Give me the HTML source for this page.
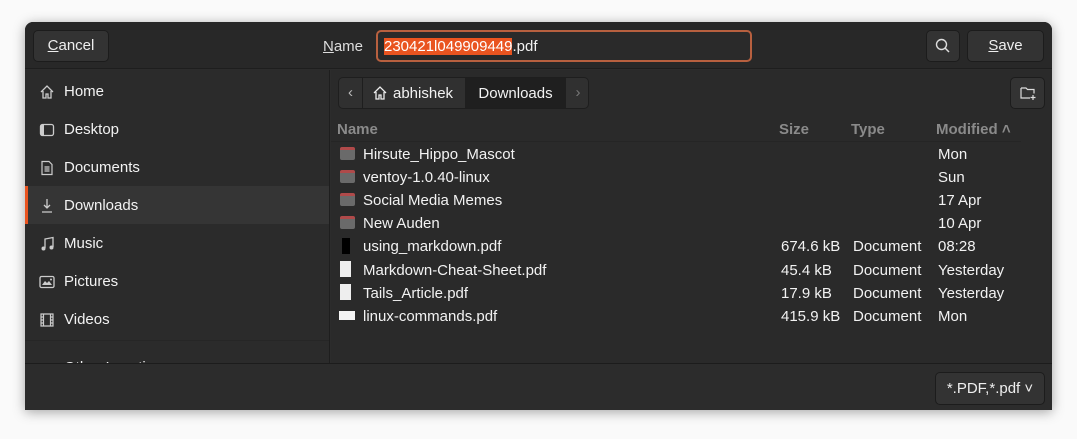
<!DOCTYPE html>
<html><head><style>
*{box-sizing:border-box;margin:0;padding:0}
body{width:1077px;height:439px;background:#fafafa;font-family:"Liberation Sans","DejaVu Sans",sans-serif;font-size:15px;color:#f2f2f2;position:relative;overflow:hidden}
.win{position:absolute;left:25px;top:22px;width:1027px;height:388px;background:#2c2c2c;border-radius:8px 8px 0 0;box-shadow:0 2px 12px rgba(0,0,0,.35);overflow:hidden}
.hdr{position:absolute;left:0;top:0;width:1027px;height:47px;background:#282828;border-bottom:1px solid #1e1e1e}
.btn{position:absolute;background:#333;border:1px solid #1c1c1c;border-radius:5px;text-align:center;line-height:30px;color:#eee}
.side{position:absolute;left:0;top:48px;width:305px;height:293px;background:#2b2b2b;border-right:1px solid #1e1e1e;overflow:hidden}
.si{position:absolute;left:0;width:305px;height:38px;line-height:40px;padding-left:39px}
.si b{font-weight:normal;position:absolute;left:39px}
.list{position:absolute;left:306px;top:48px;width:721px;height:293px;background:#2a2a2a}
.row{position:absolute;left:0;width:690px;height:23px;line-height:25px}
.row span{position:absolute}
.bot{position:absolute;left:0;top:341px;width:1027px;height:47px;background:#2c2c2c;border-top:1px solid #1c1c1c}
.fold{position:absolute;left:9px;top:5px;width:15px;height:13px;background:#6a6a6a;border-top:3px solid #b04a4a;border-radius:2px}
.hd{color:#8a8a8a;font-weight:bold}
</style></head><body>
<div class="win">
 <div class="hdr">
  <div class="btn" style="left:8px;top:8px;width:76px;height:32px"><u>C</u>ancel</div>
  <div style="position:absolute;left:298px;top:16px;color:#ddd"><u>N</u>ame</div>
  <div style="position:absolute;left:351px;top:8px;width:376px;height:32px;border:2px solid #b8603f;border-radius:5px;background:#2a2a2a">
   <span style="position:absolute;left:6px;top:5px;line-height:19px"><span style="background:#e95420;color:#fff">230421l049909449</span>.pdf</span>
  </div>
  <div class="btn" style="left:901px;top:8px;width:34px;height:32px">
   <svg width="16" height="16" viewBox="0 0 16 16" style="margin-top:7px"><circle cx="6.5" cy="6.5" r="5" fill="none" stroke="#ddd" stroke-width="1.4"/><path d="M10 10l4 4" stroke="#ddd" stroke-width="1.5"/></svg>
  </div>
  <div class="btn" style="left:942px;top:8px;width:77px;height:32px"><u>S</u>ave</div>
 </div>
 <div class="side">
  <div class="si" style="top:2px"><svg style="position:absolute;left:14px;top:12px" width="16" height="16" viewBox="0 0 16 16"><path d="M2 8L8 2l6 6M4 7v7h3v-4h2v4h3V7" fill="none" stroke="#ccc" stroke-width="1.3"/></svg><b>Home</b></div>
  <div class="si" style="top:40px"><svg style="position:absolute;left:14px;top:12px" width="16" height="16" viewBox="0 0 16 16"><rect x="1.5" y="2.5" width="13" height="11" rx="2" fill="none" stroke="#ccc" stroke-width="1.3"/><rect x="2" y="3" width="3" height="10" fill="#ccc"/></svg><b>Desktop</b></div>
  <div class="si" style="top:78px"><svg style="position:absolute;left:14px;top:12px" width="16" height="16" viewBox="0 0 16 16"><path d="M3 1.5h7l3 3v10H3z M5.5 7h5M5.5 9h5M5.5 11h5" fill="none" stroke="#ccc" stroke-width="1.2"/></svg><b>Documents</b></div>
  <div class="si" style="top:116px;background:#353535"><div style="position:absolute;left:0;top:0;width:3px;height:38px;background:#e95420"></div><svg style="position:absolute;left:14px;top:12px" width="16" height="16" viewBox="0 0 16 16"><path d="M8 1v9M5 7l3 3 3-3M3 14h10" fill="none" stroke="#ccc" stroke-width="1.3"/></svg><b>Downloads</b></div>
  <div class="si" style="top:154px"><svg style="position:absolute;left:14px;top:12px" width="16" height="16" viewBox="0 0 16 16"><path d="M6 12V3l8-1.5V11" fill="none" stroke="#ccc" stroke-width="1.3"/><circle cx="4.5" cy="12.5" r="2" fill="#ccc"/><circle cx="12.5" cy="11.5" r="2" fill="#ccc"/></svg><b>Music</b></div>
  <div class="si" style="top:192px"><svg style="position:absolute;left:14px;top:12px" width="16" height="16" viewBox="0 0 16 16"><rect x="1" y="2.5" width="14" height="11" rx="1.5" fill="none" stroke="#ccc" stroke-width="1.3"/><path d="M3 11l3-4 2 2 2-2 3 4z" fill="#ccc"/><circle cx="12" cy="5.5" r="1" fill="#ccc"/></svg><b>Pictures</b></div>
  <div class="si" style="top:230px"><svg style="position:absolute;left:14px;top:12px" width="16" height="16" viewBox="0 0 16 16"><path d="M2 2h12v12H2zM4.5 2v12M11.5 2v12M2 5h2.5M2 8h2.5M2 11h2.5M11.5 5H14M11.5 8H14M11.5 11H14" fill="none" stroke="#ccc" stroke-width="1.2"/></svg><b>Videos</b></div>
  <div style="position:absolute;left:0;top:270px;width:305px;height:1px;background:#262626"></div>
  <div style="position:absolute;left:39px;top:289px;color:#eee">Other Locations</div>
 </div>
 <div class="list">
  <div style="position:absolute;left:7px;top:7px;width:251px;height:32px;border:1px solid #1e1e1e;border-radius:5px;background:#303030;overflow:hidden">
   <div style="position:absolute;left:0;top:0;width:24px;height:30px;border-right:1px solid #1e1e1e;text-align:center;line-height:30px;color:#bbb">‹</div>
   <svg style="position:absolute;left:33px;top:7px" width="16" height="16" viewBox="0 0 16 16"><path d="M2 8L8 2l6 6M4 7v7h3v-4h2v4h3V7" fill="none" stroke="#eee" stroke-width="1.3"/></svg>
   <div style="position:absolute;left:54px;top:0;line-height:31px">abhishek</div>
   <div style="position:absolute;left:126px;top:0;width:101px;height:30px;background:#1f1f1f;line-height:31px;text-align:center">Downloads</div>
   <div style="position:absolute;left:227px;top:0;width:24px;height:30px;text-align:center;line-height:30px;color:#777">›</div>
  </div>
  <div class="btn" style="left:679px;top:7px;width:35px;height:32px"><svg width="18" height="16" viewBox="0 0 18 16" style="margin-top:7px"><path d="M2 3h5l1.5 1.5H15v4M2 3v10h9" fill="none" stroke="#ddd" stroke-width="1.2"/><path d="M14 10v5M11.5 12.5h5" stroke="#ddd" stroke-width="1.2"/></svg></div>
  <div style="position:absolute;left:0;top:46px;width:690px;height:26px;line-height:28px;border-bottom:1px solid #252525" class="hd">
   <span style="position:absolute;left:6px">Name</span><span style="position:absolute;left:448px">Size</span><span style="position:absolute;left:520px">Type</span><span style="position:absolute;left:605px">Modified ˄</span>
  </div>
  <div class="row" style="top:72px"><div class="fold"></div><span style="left:32px">Hirsute_Hippo_Mascot</span><span style="left:607px">Mon</span></div>
  <div class="row" style="top:95px"><div class="fold"></div><span style="left:32px">ventoy-1.0.40-linux</span><span style="left:607px">Sun</span></div>
  <div class="row" style="top:118px"><div class="fold"></div><span style="left:32px">Social Media Memes</span><span style="left:607px">17 Apr</span></div>
  <div class="row" style="top:141px"><div class="fold"></div><span style="left:32px">New Auden</span><span style="left:607px">10 Apr</span></div>
  <div class="row" style="top:164px"><div style="position:absolute;left:11px;top:4px;width:8px;height:16px;background:#000"></div><span style="left:32px">using_markdown.pdf</span><span style="left:450px">674.6 kB</span><span style="left:522px">Document</span><span style="left:607px">08:28</span></div>
  <div class="row" style="top:188px"><div style="position:absolute;left:9px;top:3px;width:11px;height:16px;background:#eee"></div><span style="left:32px">Markdown-Cheat-Sheet.pdf</span><span style="left:450px">45.4 kB</span><span style="left:522px">Document</span><span style="left:607px">Yesterday</span></div>
  <div class="row" style="top:211px"><div style="position:absolute;left:9px;top:3px;width:11px;height:16px;background:#eee"></div><span style="left:32px">Tails_Article.pdf</span><span style="left:450px">17.9 kB</span><span style="left:522px">Document</span><span style="left:607px">Yesterday</span></div>
  <div class="row" style="top:234px"><div style="position:absolute;left:8px;top:7px;width:16px;height:9px;background:#f4f4f4"></div><span style="left:32px">linux-commands.pdf</span><span style="left:450px">415.9 kB</span><span style="left:522px">Document</span><span style="left:607px">Mon</span></div>
 </div>
 <div class="bot">
  <div class="btn" style="left:910px;top:8px;width:110px;height:33px;line-height:31px">*.PDF,*.pdf ˅</div>
 </div>
</div>
</body></html>
